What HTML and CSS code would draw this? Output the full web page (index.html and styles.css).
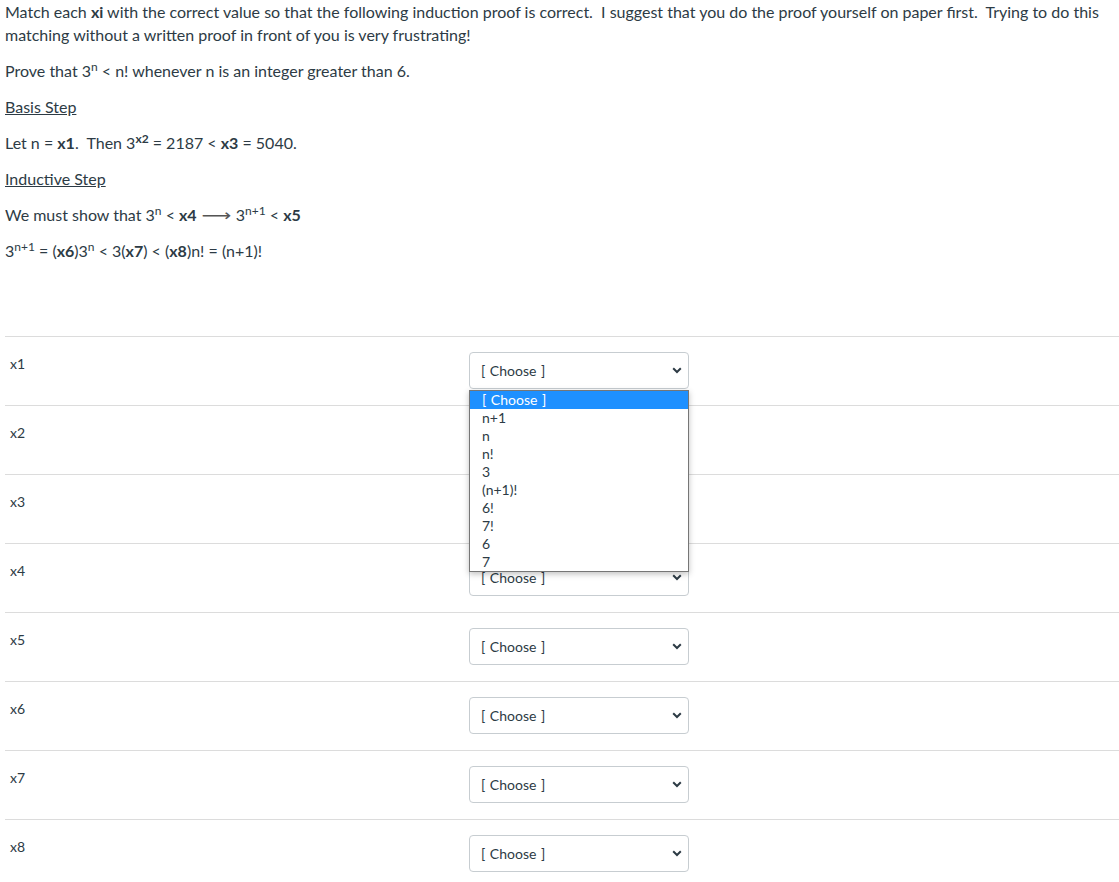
FILE: index.html
```html
<!DOCTYPE html>
<html lang="en">
<head>
    <meta charset="UTF-8">
    <title>Quiz Question</title>
    <link rel="stylesheet" href="styles.css">
</head>
<body>
    <div class="question-text">
        <p>Match each <strong>xi</strong> with the correct value so that the following induction proof is correct.&nbsp; I suggest that you do the proof yourself on paper first.&nbsp; Trying to do this matching without a written proof in front of you is very frustrating!</p>
        <p>Prove that 3<sup>n</sup> &lt; n! whenever n is an integer greater than 6.</p>
        <p><span class="u">Basis Step</span></p>
        <p>Let n = <strong>x1</strong>.&nbsp; Then 3<sup><strong>x2</strong></sup> = 2187 &lt; <strong>x3</strong> = 5040.</p>
        <p><span class="u">Inductive Step</span></p>
        <p>We must show that 3<sup>n</sup> &lt; <strong>x4</strong> <span class="arrow">&#10230;</span> 3<sup>n+1</sup> &lt; <strong>x5</strong></p>
        <p>3<sup>n+1</sup> = (<strong>x6</strong>)3<sup>n</sup> &lt; 3(<strong>x7</strong>) &lt; (<strong>x8</strong>)n! = (n+1)!</p>
    </div>

    <div class="answers">
        <div class="answer-row">
            <div class="answer-label">x1</div>
            <div class="select-wrap">
                <div class="select-box">
                    <span>[ Choose ]</span>
                    <svg class="chevron" width="10" height="7" viewBox="0 0 10 7"><path d="M1.2 1.3 L5 5 L8.8 1.3" fill="none" stroke="#2d3b45" stroke-width="2"/></svg>
                </div>
                <ul class="option-list">
                    <li class="active">[ Choose ]</li>
                    <li>n+1</li>
                    <li>n</li>
                    <li>n!</li>
                    <li>3</li>
                    <li>(n+1)!</li>
                    <li>6!</li>
                    <li>7!</li>
                    <li>6</li>
                    <li>7</li>
                </ul>
            </div>
        </div>
        <div class="answer-row">
            <div class="answer-label">x2</div>
            <div class="select-wrap">
                <div class="select-box">
                    <span>[ Choose ]</span>
                    <svg class="chevron" width="10" height="7" viewBox="0 0 10 7"><path d="M1.2 1.3 L5 5 L8.8 1.3" fill="none" stroke="#2d3b45" stroke-width="2"/></svg>
                </div>
            </div>
        </div>
        <div class="answer-row">
            <div class="answer-label">x3</div>
            <div class="select-wrap">
                <div class="select-box">
                    <span>[ Choose ]</span>
                    <svg class="chevron" width="10" height="7" viewBox="0 0 10 7"><path d="M1.2 1.3 L5 5 L8.8 1.3" fill="none" stroke="#2d3b45" stroke-width="2"/></svg>
                </div>
            </div>
        </div>
        <div class="answer-row">
            <div class="answer-label">x4</div>
            <div class="select-wrap">
                <div class="select-box">
                    <span>[ Choose ]</span>
                    <svg class="chevron" width="10" height="7" viewBox="0 0 10 7"><path d="M1.2 1.3 L5 5 L8.8 1.3" fill="none" stroke="#2d3b45" stroke-width="2"/></svg>
                </div>
            </div>
        </div>
        <div class="answer-row">
            <div class="answer-label">x5</div>
            <div class="select-wrap">
                <div class="select-box">
                    <span>[ Choose ]</span>
                    <svg class="chevron" width="10" height="7" viewBox="0 0 10 7"><path d="M1.2 1.3 L5 5 L8.8 1.3" fill="none" stroke="#2d3b45" stroke-width="2"/></svg>
                </div>
            </div>
        </div>
        <div class="answer-row">
            <div class="answer-label">x6</div>
            <div class="select-wrap">
                <div class="select-box">
                    <span>[ Choose ]</span>
                    <svg class="chevron" width="10" height="7" viewBox="0 0 10 7"><path d="M1.2 1.3 L5 5 L8.8 1.3" fill="none" stroke="#2d3b45" stroke-width="2"/></svg>
                </div>
            </div>
        </div>
        <div class="answer-row">
            <div class="answer-label">x7</div>
            <div class="select-wrap">
                <div class="select-box">
                    <span>[ Choose ]</span>
                    <svg class="chevron" width="10" height="7" viewBox="0 0 10 7"><path d="M1.2 1.3 L5 5 L8.8 1.3" fill="none" stroke="#2d3b45" stroke-width="2"/></svg>
                </div>
            </div>
        </div>
        <div class="answer-row">
            <div class="answer-label">x8</div>
            <div class="select-wrap">
                <div class="select-box">
                    <span>[ Choose ]</span>
                    <svg class="chevron" width="10" height="7" viewBox="0 0 10 7"><path d="M1.2 1.3 L5 5 L8.8 1.3" fill="none" stroke="#2d3b45" stroke-width="2"/></svg>
                </div>
            </div>
        </div>
    </div>
</body>
</html>
```

FILE: styles.css
```css
body {
    font-family: Lato, "Liberation Sans", sans-serif;
    font-size: 14px;
    color: #2d3b45;
    margin: 0 0 0 5px;
    background-color: #fff;
}

p {
    margin: 0 0 13px;
    font-size: 16px;
    line-height: 23px;
}

strong {
    font-weight: bold;
}

sup {
    font-size: 75%;
    line-height: 0;
    position: relative;
    vertical-align: baseline;
    top: -0.5em;
}

.u {
    text-decoration: underline;
}

.arrow {
    display: inline-block;
    font-family: "DejaVu Sans", sans-serif;
    font-size: 16px;
    line-height: 1;
    color: #555;
    transform: scaleX(1.3);
    margin: 0 4px;
}

.answers {
    margin-top: 74px;
}

.answer-row {
    display: grid;
    grid-template-columns: 464px 220px;
    border-top: 1px solid #dcdcdc;
    padding: 15px 0 16px;
}

.answer-label {
    padding: 3px 0 0 5px;
    line-height: 18px;
    font-size: 14px;
}

.select-wrap {
    position: relative;
}

.select-box {
    height: 37px;
    box-sizing: border-box;
    border: 1px solid #c7cdd1;
    border-radius: 4px;
    background-color: #fff;
    display: flex;
    align-items: center;
    justify-content: space-between;
    padding: 0 6px 0 11px;
    font-size: 14px;
    word-spacing: 1px;
}

.option-list {
    position: absolute;
    top: 38px;
    left: 0;
    width: 220px;
    box-sizing: border-box;
    margin: 0;
    padding: 0;
    list-style: none;
    background-color: #fff;
    border: 1px solid #767676;
    box-shadow: 0 2px 6px rgba(0, 0, 0, 0.25);
    z-index: 10;
}

.option-list li {
    height: 18px;
    line-height: 18px;
    padding-left: 12px;
    font-size: 14px;
    word-spacing: 1px;
}

.option-list li.active {
    background-color: #1e90ff;
    color: #fff;
}
```
